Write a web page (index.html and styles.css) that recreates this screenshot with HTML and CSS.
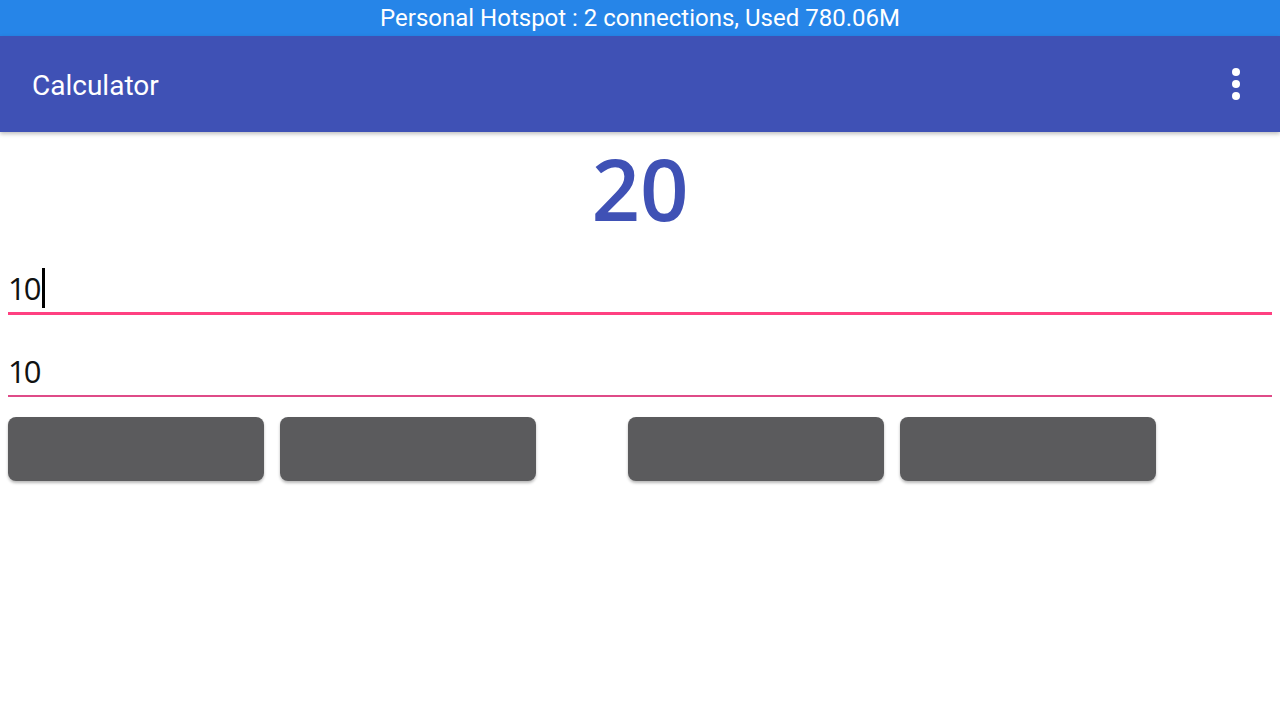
FILE: index.html
```html
<!DOCTYPE html>
<html>
<head>
<meta charset="utf-8">
<link rel="stylesheet" href="styles.css">
</head>
<body>
<div class="status">Personal Hotspot : 2 connections, Used 780.06M</div>
<header class="appbar">
  <div class="title">Calculator</div>
  <div class="menu"><span></span><span></span><span></span></div>
</header>
<main class="content">
  <div class="result">20</div>
  <div class="field focused"><span class="value">10</span><span class="caret"></span></div>
  <div class="field"><span class="value">10</span></div>
  <div class="buttons">
    <div class="btn"></div>
    <div class="btn"></div>
    <div class="btn btn-split"></div>
    <div class="btn"></div>
  </div>
</main>
</body>
</html>
```

FILE: styles.css
```css
html, body {
  margin: 0;
  padding: 0;
  background: #ffffff;
  width: 1280px;
  height: 720px;
  overflow: hidden;
  font-family: Roboto, "Noto Sans", sans-serif;
}

.status {
  height: 36px;
  line-height: 36px;
  background: #2685e8;
  color: #ffffff;
  text-align: center;
  font-family: Roboto, sans-serif;
  font-size: 24px;
}

.appbar {
  height: 96px;
  background: #3f51b5;
  display: flex;
  align-items: center;
  justify-content: space-between;
  padding: 0 40px 0 32px;
  box-shadow: 0 2px 4px rgba(0, 0, 0, 0.25);
  position: relative;
  z-index: 1;
}

.title {
  color: #ffffff;
  font-family: Roboto, sans-serif;
  font-size: 28px;
  padding-top: 2px;
}

.menu {
  display: flex;
  flex-direction: column;
  gap: 4px;
}

.menu span {
  width: 8px;
  height: 8px;
  border-radius: 50%;
  background: #ffffff;
}

.content {
  padding: 0 8px;
}

.result {
  margin-top: 14px;
  text-align: center;
  color: #3f51b5;
  font-family: "Open Sans", "Noto Sans", sans-serif;
  font-weight: 600;
  font-size: 85px;
  line-height: 85px;
  height: 85px;
}

.field {
  display: flex;
  align-items: center;
  height: 40px;
  padding-bottom: 4px;
  border-bottom: 2px solid #df4b88;
  font-family: "Open Sans", "Noto Sans", sans-serif;
  font-size: 31px;
  letter-spacing: -2px;
  line-height: 40px;
  color: #111111;
  margin-top: 36px;
}

.field.focused {
  margin-top: 37px;
  border-bottom: 3px solid #ff4081;
}

.value {
  display: block;
}

.caret {
  display: block;
  width: 3px;
  height: 40px;
  background: #000000;
  margin-left: 3px;
}

.buttons {
  display: flex;
  gap: 16px;
  margin-top: 20px;
}

.btn {
  width: 256px;
  height: 64px;
  background: #5b5b5d;
  border-radius: 8px;
  box-shadow: 0 2px 3px rgba(0, 0, 0, 0.28);
}

.btn-split {
  margin-left: 76px;
}
```
